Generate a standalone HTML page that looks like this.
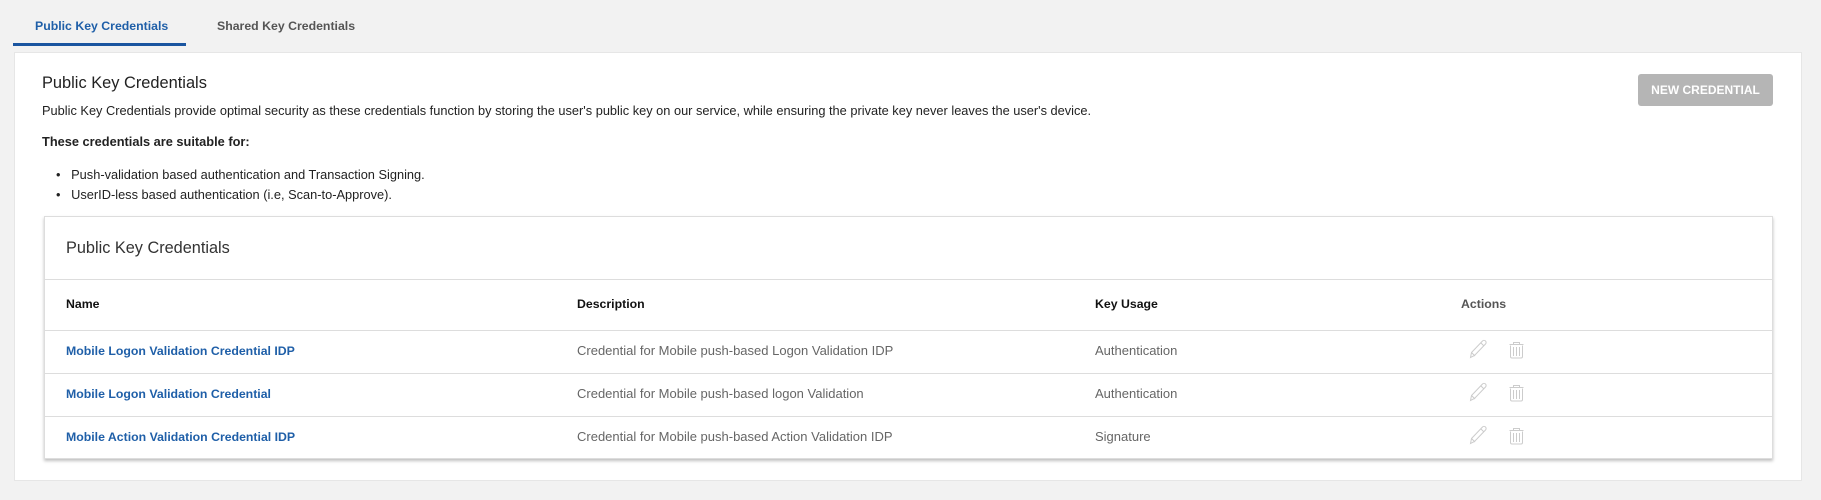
<!DOCTYPE html>
<html><head><meta charset="utf-8"><style>
*{box-sizing:border-box;margin:0;padding:0}
body{width:1821px;height:500px;background:#f2f2f2;font-family:"Liberation Sans",sans-serif;color:#222;position:relative;overflow:hidden}
.abs{position:absolute;white-space:nowrap}
.tab{font-size:12.3px;top:19px}
.card{position:absolute;left:14px;top:52px;width:1788px;height:429px;background:#fff;border:1px solid #e6e6e6}
.inner{position:absolute;left:44px;top:216px;width:1729px;height:243px;background:#fff;border:1px solid #ddd;box-shadow:0 2px 3px rgba(0,0,0,.25)}
.line{position:absolute;left:0;right:0;height:1px;background:#ddd}
.th{font-size:12.3px;font-weight:bold;color:#111}
.td{font-size:13px;color:#666}
.lnk{font-size:12.3px;font-weight:bold;color:#1f5fa8}
</style></head><body>
<div class="abs tab" style="left:35px;color:#1f5fa8;font-weight:bold">Public Key Credentials</div>
<div class="abs tab" style="left:217px;color:#555;font-weight:bold">Shared Key Credentials</div>
<div class="abs" style="left:13px;top:43px;width:173px;height:3px;background:#1a55a0"></div>
<div class="card"></div>
<div class="abs" style="left:42px;top:74px;font-size:16.4px;color:#222">Public Key Credentials</div>
<div class="abs" style="left:42px;top:103px;font-size:12.8px;color:#222">Public Key Credentials provide optimal security as these credentials function by storing the user's public key on our service, while ensuring the private key never leaves the user's device.</div>
<div class="abs" style="left:42px;top:134px;font-size:12.8px;font-weight:bold;color:#222">These credentials are suitable for:</div>
<div class="abs" style="left:56px;top:165px;font-size:12.8px;line-height:20px">&bull;&nbsp;&nbsp;&nbsp;Push-validation based authentication and Transaction Signing.<br>&bull;&nbsp;&nbsp;&nbsp;UserID-less based authentication (i.e, Scan-to-Approve).</div>
<div class="abs" style="left:1638px;top:74px;width:135px;height:32px;background:#b5b5b5;border-radius:3px;color:#fff;font-size:12px;font-weight:bold;text-align:center;line-height:32px">NEW CREDENTIAL</div>
<div class="inner">
 <div class="abs" style="left:21px;top:22px;font-size:16.3px;color:#333">Public Key Credentials</div>
 <div class="line" style="top:62px"></div>
 <div class="abs th" style="left:21px;top:80px">Name</div>
 <div class="abs th" style="left:532px;top:80px">Description</div>
 <div class="abs th" style="left:1050px;top:80px">Key Usage</div>
 <div class="abs th" style="left:1416px;top:80px;color:#555">Actions</div>
 <div class="line" style="top:113px"></div>
 <div class="line" style="top:156px"></div>
 <div class="line" style="top:199px"></div>
 <div class="abs lnk" style="left:21px;top:127px">Mobile Logon Validation Credential IDP</div>
 <div class="abs td" style="left:532px;top:126px">Credential for Mobile push-based Logon Validation IDP</div>
 <div class="abs td" style="left:1050px;top:126px">Authentication</div>
 <div class="abs lnk" style="left:21px;top:170px">Mobile Logon Validation Credential</div>
 <div class="abs td" style="left:532px;top:169px">Credential for Mobile push-based logon Validation</div>
 <div class="abs td" style="left:1050px;top:169px">Authentication</div>
 <div class="abs lnk" style="left:21px;top:213px">Mobile Action Validation Credential IDP</div>
 <div class="abs td" style="left:532px;top:212px">Credential for Mobile push-based Action Validation IDP</div>
 <div class="abs td" style="left:1050px;top:212px">Signature</div>
</div>
<svg class="abs" style="left:0;top:0" width="1821" height="500">
<defs><g id="ic" fill="none" stroke="#ccc" stroke-width="1">
<path d="M1470.5 357.5l1-5 11-11.5a2 2 0 0 1 3 3l-11 11.5z M1471.5 352.5l3.5 3.5 M1481 343l3 3"/>
<path d="M1509.5 344.5h14 M1513.5 344.5v-2h6v2 M1510.5 345.5v11a1.5 1.5 0 0 0 1.5 1.5h9a1.5 1.5 0 0 0 1.5 -1.5v-11 M1513.5 347v9 M1516.5 347v9 M1519.5 347v9"/>
</g></defs>
<use href="#ic"/><use href="#ic" y="43"/><use href="#ic" y="86"/>
</svg>
</body></html>
